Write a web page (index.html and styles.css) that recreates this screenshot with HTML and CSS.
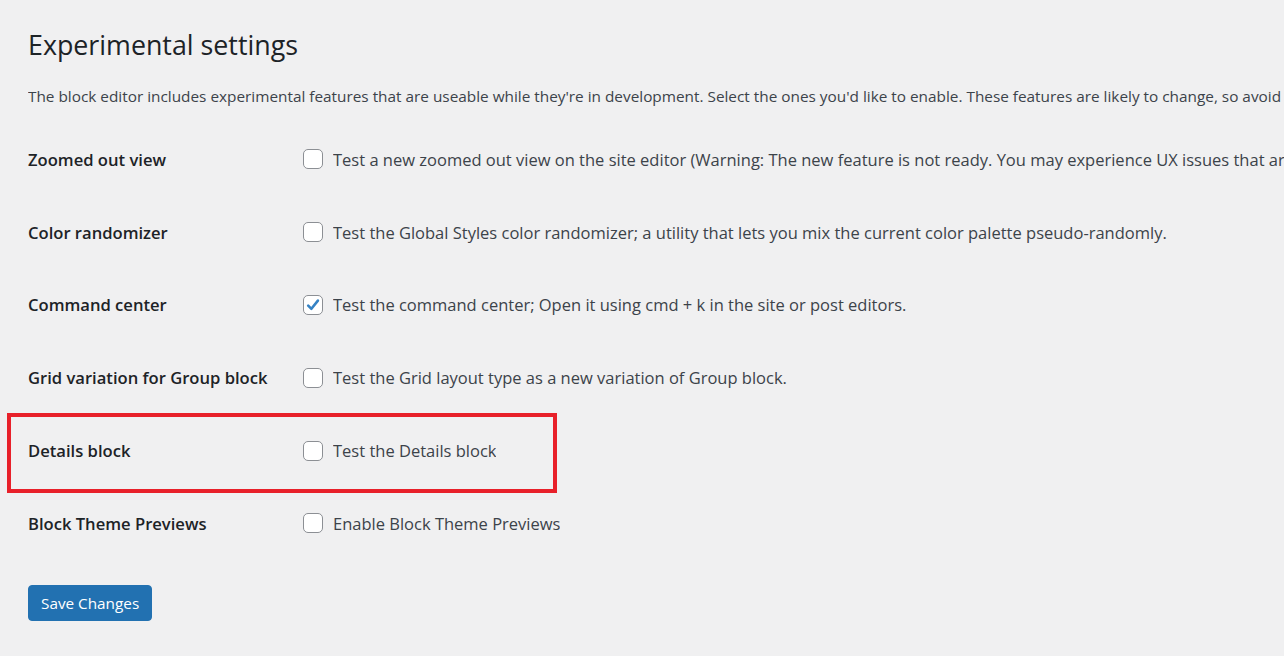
FILE: index.html
```html
<!DOCTYPE html>
<html lang="en">
<head>
<meta charset="utf-8">
<title>Experimental settings</title>
<link rel="stylesheet" href="styles.css">
</head>
<body>
<div class="wrap">
  <h1 class="title">Experimental settings</h1>
  <p class="desc">The block editor includes experimental features that are useable while they're in development. Select the ones you'd like to enable. These features are likely to change, so avoid</p>
  <form class="settings">
    <div class="rows">
      <div class="row">
        <div class="label">Zoomed out view</div>
        <label class="field"><span class="cb"></span><span class="ftext">Test a new zoomed out view on the site editor (Warning: The new feature is not ready. You may experience UX issues that are</span></label>
      </div>
      <div class="row">
        <div class="label">Color randomizer</div>
        <label class="field"><span class="cb"></span><span class="ftext">Test the Global Styles color randomizer; a utility that lets you mix the current color palette pseudo-randomly.</span></label>
      </div>
      <div class="row">
        <div class="label">Command center</div>
        <label class="field"><span class="cb checked"><svg viewBox="0 0 20 20" width="20" height="20"><path d="M5.2 10.6 L8.4 13.8 L14.9 5.6" fill="none" stroke="#3582c4" stroke-width="2.6" stroke-linecap="round" stroke-linejoin="round"/></svg></span><span class="ftext">Test the command center; Open it using cmd + k in the site or post editors.</span></label>
      </div>
      <div class="row">
        <div class="label">Grid variation for Group block</div>
        <label class="field"><span class="cb"></span><span class="ftext">Test the Grid layout type as a new variation of Group block.</span></label>
      </div>
      <div class="row highlighted">
        <div class="label">Details block</div>
        <label class="field"><span class="cb"></span><span class="ftext">Test the Details block</span></label>
        <div class="annot"></div>
      </div>
      <div class="row">
        <div class="label">Block Theme Previews</div>
        <label class="field"><span class="cb"></span><span class="ftext">Enable Block Theme Previews</span></label>
      </div>
    </div>
    <div class="submit"><button type="button" class="btn-primary">Save Changes</button></div>
  </form>
</div>
</body>
</html>
```
FILE: styles.css
```css
html, body {
  margin: 0;
  padding: 0;
  background: #f0f0f1;
  overflow: hidden;
}
body {
  font-family: "Open Sans", "Noto Sans", "Liberation Sans", sans-serif;
  color: #3c434a;
  width: 1284px;
  height: 656px;
}
.wrap {
  padding: 26px 0 0 28px;
  overflow: hidden;
}
.title {
  margin: 0;
  font-size: 26.8px;
  font-weight: 400;
  line-height: 37px;
  color: #1d2327;
}
.desc {
  margin: 21px 0 0;
  font-size: 15.35px;
  line-height: 24px;
  white-space: nowrap;
  overflow: hidden;
  color: #3c434a;
}
.rows {
  margin-top: 15px;
  display: flex;
  flex-direction: column;
}
.row {
  position: relative;
  display: flex;
  align-items: center;
  height: 72.8px;
}
.label {
  width: 275px;
  flex: none;
  font-size: 16.6px;
  font-weight: 600;
  color: #1d2327;
}
.field {
  display: flex;
  align-items: center;
  min-width: 0;
  flex: 1;
  font-size: 16.5px;
  color: #3c434a;
}
.ftext {
  white-space: nowrap;
  overflow: hidden;
}
.cb {
  flex: none;
  width: 20px;
  height: 20px;
  box-sizing: border-box;
  border: 1px solid #8c8f94;
  border-radius: 5px;
  background: #fff;
  margin-right: 10px;
  position: relative;
}
.cb svg {
  position: absolute;
  left: -1px;
  top: -1px;
}
.annot {
  position: absolute;
  left: -21px;
  top: -1px;
  width: 550px;
  height: 80px;
  box-sizing: border-box;
  border: 4px solid #e8202a;
  pointer-events: none;
}
.submit {
  margin-top: 25px;
}
.btn-primary {
  height: 36px;
  padding: 0 12px;
  border: 1px solid #2271b1;
  border-radius: 4px;
  background: #2271b1;
  color: #fff;
  font-family: inherit;
  font-size: 15.3px;
  line-height: 34px;
}
```
